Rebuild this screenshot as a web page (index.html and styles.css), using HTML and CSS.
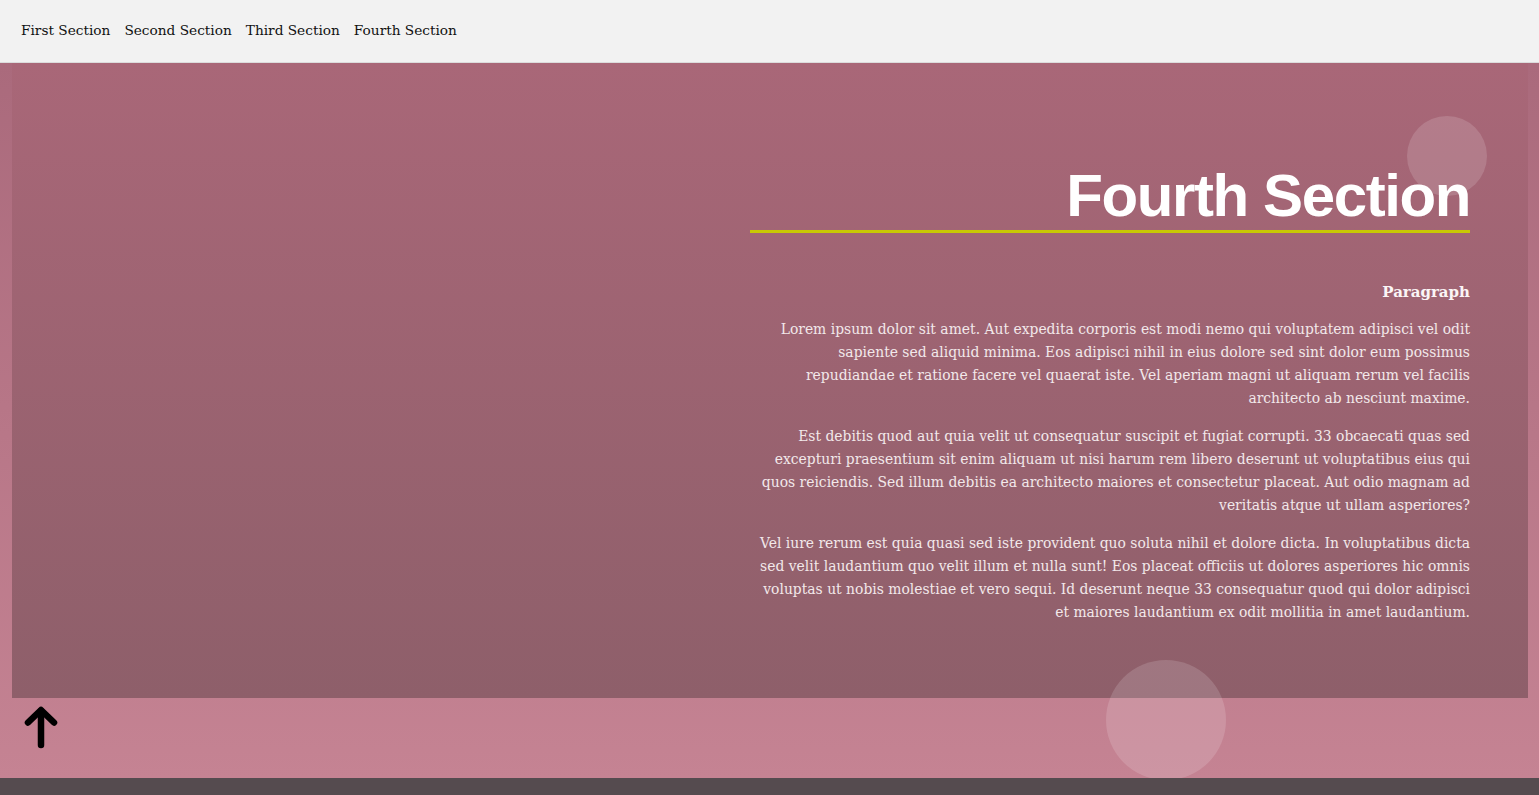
FILE: index.html
```html
<!DOCTYPE html>
<html lang="en">
<head>
<meta charset="utf-8">
<title>Fourth Section</title>
<link rel="stylesheet" href="styles.css">
</head>
<body>
<header class="topbar">
  <nav class="nav">
    <a class="nav-link" href="#first">First Section</a>
    <a class="nav-link" href="#second">Second Section</a>
    <a class="nav-link" href="#third">Third Section</a>
    <a class="nav-link" href="#fourth">Fourth Section</a>
  </nav>
</header>
<section class="section" id="fourth">
  <div class="panel">
    <div class="content">
      <h1 class="title">Fourth Section</h1>
      <h3 class="subtitle">Paragraph</h3>
      <p class="text">Lorem ipsum dolor sit amet. Aut expedita corporis est modi nemo qui voluptatem adipisci vel odit sapiente sed aliquid minima. Eos adipisci nihil in eius dolore sed sint dolor eum possimus repudiandae et ratione facere vel quaerat iste. Vel aperiam magni ut aliquam rerum vel facilis architecto ab nesciunt maxime.</p>
      <p class="text">Est debitis quod aut quia velit ut consequatur suscipit et fugiat corrupti. 33 obcaecati quas sed excepturi praesentium sit enim aliquam ut nisi harum rem libero deserunt ut voluptatibus eius qui quos reiciendis. Sed illum debitis ea architecto maiores et consectetur placeat. Aut odio magnam ad veritatis atque ut ullam asperiores?</p>
      <p class="text">Vel iure rerum est quia quasi sed iste provident quo soluta nihil et dolore dicta. In voluptatibus dicta sed velit laudantium quo velit illum et nulla sunt! Eos placeat officiis ut dolores asperiores hic omnis voluptas ut nobis molestiae et vero sequi. Id deserunt neque 33 consequatur quod qui dolor adipisci et maiores laudantium ex odit mollitia in amet laudantium.</p>
    </div>
  </div>
  <div class="bottom-row">
    <a class="to-top" href="#top" aria-label="Back to top">
      <svg width="34" height="44" viewBox="0 0 34 44" fill="none" stroke="#000" stroke-width="6.5" stroke-linecap="round" stroke-linejoin="round">
        <path d="M17 5 V39"/>
        <path d="M4 16.5 L17 4 L30 16.5"/>
      </svg>
    </a>
  </div>
  <span class="bubble bubble-top"></span>
  <span class="bubble bubble-bottom"></span>
</section>
<footer class="footer"></footer>
</body>
</html>
```
FILE: styles.css
```css
* { box-sizing: border-box; }
html, body { margin: 0; padding: 0; }
body {
  font-family: "DejaVu Serif", "Liberation Serif", serif;
  background: #554b4f;
}
.topbar {
  height: 63px;
  background: #f2f2f2;
  border-bottom: 1px solid #dcdcdc;
  display: flex;
  align-items: center;
}
.nav {
  display: flex;
  gap: 14px;
  padding-left: 21px;
  padding-bottom: 2px;
}
.nav-link {
  color: #111;
  text-decoration: none;
  font-size: 13.7px;
}
.section {
  position: relative;
  overflow: hidden;
  background: linear-gradient(#aa6a7c, #c58393);
  padding: 0 11px 0 12px;
}
.panel {
  height: 635px;
  background: linear-gradient(#a96778, #8e5f6a);
  padding: 99px 58px 0 0;
  display: flex;
  justify-content: flex-end;
}
.content {
  width: 722px;
  text-align: right;
  position: relative;
  z-index: 1;
}
.title {
  margin: 0 0 0 2px;
  font-family: "Liberation Sans", Arial, sans-serif;
  font-weight: bold;
  font-size: 60px;
  letter-spacing: -1.4px;
  color: #fff;
  border-bottom: 3px solid #c8c805;
  line-height: 68px;
}
.subtitle {
  margin: 49px 0 15px;
  font-size: 15px;
  font-weight: bold;
  color: #fbf5f6;
  line-height: 21px;
}
.text {
  margin: 0 0 15px;
  font-size: 13.9px;
  line-height: 23px;
  color: #f2e8ea;
}
.bottom-row {
  height: 80px;
  display: flex;
  align-items: flex-start;
  padding: 8px 0 0 12px;
}
.to-top {
  display: block;
  width: 34px;
  height: 44px;
}
.to-top svg { display: block; }
.bubble {
  position: absolute;
  border-radius: 50%;
  background: rgba(255, 255, 255, 0.15);
  pointer-events: none;
}
.bubble-top {
  left: 1407px;
  top: 53px;
  width: 80px;
  height: 80px;
}
.bubble-bottom {
  left: 1106px;
  top: 597px;
  width: 120px;
  height: 120px;
}
.footer {
  height: 60px;
  background: #554b4f;
}
```
